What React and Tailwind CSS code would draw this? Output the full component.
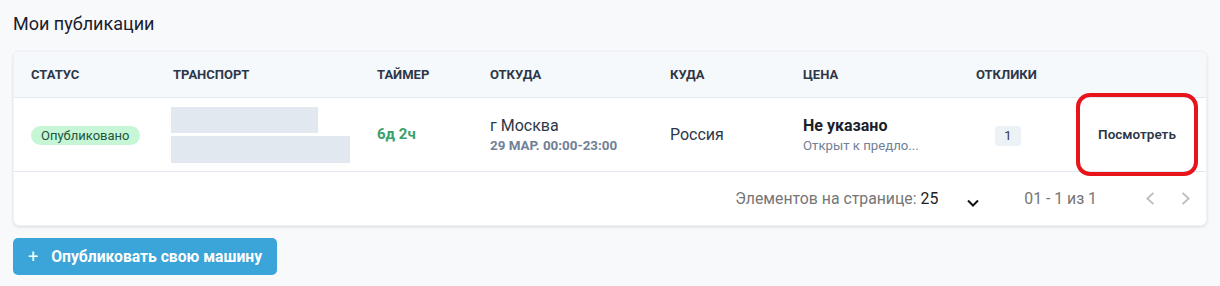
import React from "react";

function ChevDown({ className = "" }) {
  return (
    <svg width="12" height="8" viewBox="0 0 12 8" className={className} fill="none" stroke="currentColor" strokeWidth="2">
      <path d="M1 1.5l5 5 5-5" />
    </svg>
  );
}
function ChevSide({ dir, className = "" }) {
  return (
    <svg width="10" height="13" viewBox="0 0 10 13" className={className} fill="none" stroke="currentColor" strokeWidth="1.8">
      <path d={dir === "left" ? "M8.5 0.8L2.3 6.5l6.2 5.7" : "M1.5 0.8l6.2 5.7-6.2 5.7"} />
    </svg>
  );
}

export default function App() {
  const cols = "grid grid-cols-[142px_204px_113px_180px_133px_173px_84px_1fr] pl-[17px]";
  return (
    <div className="w-[1220px] h-[286px] bg-[#f8f9fb] font-['Roboto',sans-serif] px-[13px] pt-[12px]">
      <div className="text-[18px] leading-[24px] text-[#1a202c] mb-[15px]">Мои публикации</div>
      <div className="w-[1194px] bg-white rounded-[6px] shadow-[0_1px_3px_rgba(0,0,0,0.12)] border border-[#eef1f5]">
        <div className={`${cols} h-[46px] items-center bg-[#f6f9fc] border-b border-[#e2e8f0] rounded-t-[6px] text-[13px] font-bold text-[#2d3748]`}>
          <div>СТАТУС</div>
          <div>ТРАНСПОРТ</div>
          <div>ТАЙМЕР</div>
          <div>ОТКУДА</div>
          <div>КУДА</div>
          <div>ЦЕНА</div>
          <div>ОТКЛИКИ</div>
          <div></div>
        </div>
        <div className={`${cols} h-[74px] items-center border-b border-[#e2e8f0]`}>
          <div>
            <span className="inline-block bg-[#c6f6d5] text-[#22543d] text-[13px] leading-[19px] px-[10px] rounded-full">Опубликовано</span>
          </div>
          <div className="flex flex-col gap-[3px] -ml-[2px]">
            <div className="w-[147px] h-[26px] bg-[#e2e8f0]"></div>
            <div className="w-[179px] h-[27px] bg-[#e2e8f0]"></div>
          </div>
          <div className="text-[15px] font-bold text-[#38a169]">6д 2ч</div>
          <div className="flex flex-col">
            <span className="text-[16px] leading-[22px] text-[#2d3748]">г Москва</span>
            <span className="text-[13.4px] leading-[17px] font-bold text-[#718096]">29 МАР. 00:00-23:00</span>
          </div>
          <div className="text-[16px] text-[#2d3748]">Россия</div>
          <div className="flex flex-col">
            <span className="text-[16px] leading-[22px] font-bold text-[#1a202c]">Не указано</span>
            <span className="text-[13.2px] leading-[17px] text-[#718096]">Открыт к предло...</span>
          </div>
          <div>
            <span className="ml-[19px] inline-block bg-[#edf2f7] text-[#2d3748] text-[13px] leading-[20px] w-[26px] text-center rounded-[4px]">1</span>
          </div>
          <div className="relative h-full flex items-center justify-center">
            <span className="text-[13.5px] font-semibold text-[#2d3748] pl-[8px]">Посмотреть</span>
            <div className="absolute left-[16px] top-[-5px] w-[122px] h-[83px] border-[4px] border-[#e8141c] rounded-[14px]"></div>
          </div>
        </div>
        <div className="h-[53px] flex items-center justify-end pr-[15px] text-[15.8px] text-[#757575]">
          <span>Элементов на странице:</span>
          <span className="ml-[4px] text-[#212121]">25</span>
          <ChevDown className="ml-[29px] mt-[8px] text-[#111]" />
          <span className="ml-[45px]">01 - 1 из 1</span>
          <ChevSide dir="left" className="ml-[48px] text-[#bdbdbd]" />
          <ChevSide dir="right" className="ml-[26px] text-[#bdbdbd]" />
        </div>
      </div>
      <button className="mt-[12px] h-[37px] w-[264px] bg-[#3ba4d9] rounded-[5px] text-white text-[15.7px] font-bold flex items-center pl-[15px]">
        <span className="font-normal text-[18px] leading-none mr-[13px]">+</span>
        Опубликовать свою машину
      </button>
    </div>
  );
}
